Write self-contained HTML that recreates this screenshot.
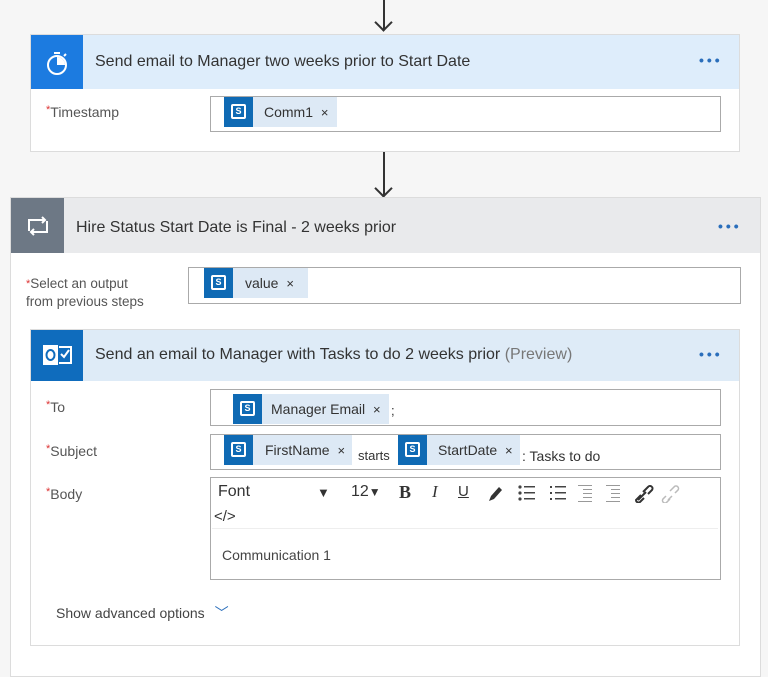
<!DOCTYPE html>
<html><head><meta charset="utf-8"><style>
*{box-sizing:border-box;margin:0;padding:0}
body{width:768px;height:664px;background:#f6f6f6;position:relative;overflow:hidden;font-family:"Liberation Sans",sans-serif;color:#333}
.a{position:absolute}
.card{position:absolute;background:#fff;border:1px solid #dcdcdc}
.hdr{position:absolute;left:0;right:0;top:0}
.ico{position:absolute;left:0;top:0;bottom:0}
.t{position:absolute;font-size:16px;color:#333;white-space:nowrap}
.dots{position:absolute;font-size:14px;color:#2a6ebb;letter-spacing:3px;font-weight:bold}
.lbl{position:absolute;font-size:14px;color:#555;white-space:nowrap}
.lbl b{color:#d33;font-weight:normal;font-size:11px;vertical-align:top}
.inp{position:absolute;border:1px solid #aaa;background:#fff}
.tok{position:absolute;background:#dde9f5;height:30px;font-size:14px;color:#333;white-space:nowrap}
.tok .s{position:absolute;left:0;top:0;width:29px;height:30px;background:#0f6ab4}
.tok .s i{position:absolute;left:7px;top:7px;width:15px;height:15px;border:2px solid #fff;border-radius:2px;font-style:normal;color:#fff;font-size:9px;font-weight:bold;line-height:11px;text-align:center}
.tok span{position:absolute;top:7px}
.arr{position:absolute;width:2px;background:#333;left:383px}
.ah{position:absolute;width:13px;height:13px;border-right:2px solid #333;border-bottom:2px solid #333;transform:rotate(45deg);left:377px}
.tb{position:absolute;top:483px;font-size:16px;color:#333}
</style></head><body>
<div class="arr" style="top:0;height:30px"></div><div class="ah" style="top:16px"></div>

<div class="card" style="left:30px;top:34px;width:710px;height:118px">
 <div class="hdr" style="height:54px;background:#deedfb"></div>
 <div class="ico" style="width:52px;height:54px;background:#1c7be0">
  <svg width="52" height="54" viewBox="0 0 52 54"><circle cx="26" cy="30" r="9" fill="none" stroke="#fff" stroke-width="2"/><path d="M26 30 L26 22 A8 8 0 0 1 34 30 Z" fill="#fff"/><rect x="23" y="17" width="6" height="2" fill="#fff"/><path d="M33 21 L35 19" stroke="#fff" stroke-width="2"/></svg>
 </div>
 <div class="t" style="left:64px;top:18px">Send email to Manager two weeks prior to Start Date</div>
 <div class="dots" style="left:668px;top:17px">•••</div>
 <div class="lbl" style="left:15px;top:69px"><b>*</b>Timestamp</div>
</div>
<div class="inp" style="left:210px;top:96px;width:511px;height:36px"></div>
<div class="tok" style="left:224px;top:97px;width:113px"><div class="s"><i>S</i></div><span style="left:40px">Comm1 <small style="font-size:13px;margin-left:4px">×</small></span></div>

<div class="arr" style="top:152px;height:43px"></div><div class="ah" style="top:182px"></div>

<div class="card" style="left:10px;top:197px;width:751px;height:480px">
 <div class="hdr" style="height:55px;background:#e9eaec"></div>
 <div class="ico" style="width:53px;height:55px;background:#6d7885">
  <svg width="53" height="55" viewBox="0 0 53 55"><path d="M18 33 V22 H34 M31 19 L34 22 L31 25 M36 23 V34 H20 M23 31 L20 34 L23 37" fill="none" stroke="#fff" stroke-width="2"/></svg>
 </div>
 <div class="t" style="left:65px;top:21px">Hire Status Start Date is Final - 2 weeks prior</div>
 <div class="dots" style="left:707px;top:20px">•••</div>
 <div class="lbl" style="left:15px;top:77px;line-height:18px;font-size:13.5px"><b>*</b>Select an output<br>from previous steps</div>
</div>
<div class="inp" style="left:188px;top:267px;width:553px;height:37px"></div>
<div class="tok" style="left:204px;top:268px;width:104px"><div class="s"><i>S</i></div><span style="left:41px">value <small style="font-size:13px;margin-left:4px">×</small></span></div>

<div class="card" style="left:30px;top:329px;width:710px;height:317px">
 <div class="hdr" style="height:51px;background:#deebf7"></div>
 <div class="ico" style="width:52px;height:51px;background:#0f6cbd">
  <svg width="52" height="51" viewBox="0 0 52 51"><rect x="12" y="15" width="15" height="20" fill="#fff"/><ellipse cx="19.5" cy="25" rx="4" ry="5" fill="none" stroke="#0f6cbd" stroke-width="2"/><path d="M28 17 H40 V33 H28" fill="none" stroke="#fff" stroke-width="2"/><path d="M30 24 L33 27 L38 20" fill="none" stroke="#fff" stroke-width="2"/></svg>
 </div>
 <div class="t" style="left:64px;top:16px">Send an email to Manager with Tasks to do 2 weeks prior <span style="color:#777">(Preview)</span></div>
 <div class="dots" style="left:668px;top:16px">•••</div>
 <div class="lbl" style="left:15px;top:69px"><b>*</b>To</div>
 <div class="lbl" style="left:15px;top:113px"><b>*</b>Subject</div>
 <div class="lbl" style="left:15px;top:156px"><b>*</b>Body</div>
 <div class="lbl" style="left:25px;top:273px;color:#444">Show advanced options <span style="color:#2a6ebb;margin-left:6px">﹀</span></div>
</div>
<div class="inp" style="left:210px;top:389px;width:511px;height:37px"></div>
<div class="tok" style="left:233px;top:394px;width:156px"><div class="s"><i>S</i></div><span style="left:38px">Manager Email <small style="font-size:13px;margin-left:4px">×</small></span></div>
<div class="a" style="left:391px;top:403px;font-size:13px">;</div>

<div class="inp" style="left:210px;top:434px;width:511px;height:36px"></div>
<div class="tok" style="left:224px;top:435px;width:128px"><div class="s"><i>S</i></div><span style="left:41px">FirstName <small style="font-size:13px;margin-left:4px">×</small></span></div>
<div class="a" style="left:358px;top:448px;font-size:13px">starts</div>
<div class="tok" style="left:398px;top:435px;width:122px"><div class="s"><i>S</i></div><span style="left:40px">StartDate <small style="font-size:13px;margin-left:4px">×</small></span></div>
<div class="a" style="left:522px;top:448px;font-size:14px">: Tasks to do</div>

<div class="inp" style="left:210px;top:477px;width:511px;height:103px"></div>
<div class="a" style="left:212px;top:528px;width:506px;height:1px;background:#eee"></div>
<div class="tb" style="left:218px">Font</div>
<div class="tb" style="left:317px;font-size:13px;top:485px">▼</div>
<div class="tb" style="left:351px">12<span style="font-size:12px">▼</span></div>
<div class="tb" style="left:399px;font-family:'Liberation Serif',serif;font-weight:bold;font-size:18px;top:482px">B</div>
<div class="tb" style="left:432px;font-family:'Liberation Serif',serif;font-style:italic;font-size:17px;top:482px">I</div>
<div class="tb" style="left:458px;text-decoration:underline;font-size:15px">U</div>
<svg class="a" style="left:486px;top:483px" width="210" height="20" viewBox="0 0 210 20"><path d="M3 18 L5 13 L13 4 L16 7 L8 16 Z" fill="#333"/>
<g fill="#444"><circle cx="34" cy="4" r="1.6"/><circle cx="34" cy="10" r="1.6"/><circle cx="34" cy="16" r="1.6"/><rect x="38" y="3" width="11" height="1.5"/><rect x="38" y="9" width="11" height="1.5"/><rect x="38" y="15" width="11" height="1.5"/>
<rect x="64" y="3" width="2" height="2"/><rect x="64" y="9" width="2" height="2"/><rect x="64" y="15" width="2" height="2"/><rect x="69" y="3" width="11" height="1.5"/><rect x="69" y="9" width="11" height="1.5"/><rect x="69" y="15" width="11" height="1.5"/></g>
<g fill="#999"><rect x="92" y="2" width="14" height="1"/><rect x="97" y="6" width="9" height="1"/><rect x="97" y="10" width="9" height="1"/><rect x="97" y="14" width="9" height="1"/><rect x="92" y="18" width="14" height="1"/>
<rect x="120" y="2" width="14" height="1"/><rect x="125" y="6" width="9" height="1"/><rect x="125" y="10" width="9" height="1"/><rect x="125" y="14" width="9" height="1"/><rect x="120" y="18" width="14" height="1"/></g>
<path d="M152 17 L160 9 M155 12 L150 17 A2.5 2.5 0 0 0 154 19 L158 15 M157 9 L162 4 A2.5 2.5 0 0 1 166 7 L162 11" fill="none" stroke="#333" stroke-width="2"/>
<path d="M182 17 L186 13 M184 8 L188 4 A2.5 2.5 0 0 1 192 7 L189 10 M180 13 L177 16 A2.5 2.5 0 0 0 181 19 L184 16" fill="none" stroke="#bbb" stroke-width="1.5"/></svg>
<div class="a" style="left:214px;top:508px;font-size:15px;color:#333">&lt;/&gt;</div>
<div class="a" style="left:222px;top:547px;font-size:14px;color:#444">Communication 1</div>
</body></html>
